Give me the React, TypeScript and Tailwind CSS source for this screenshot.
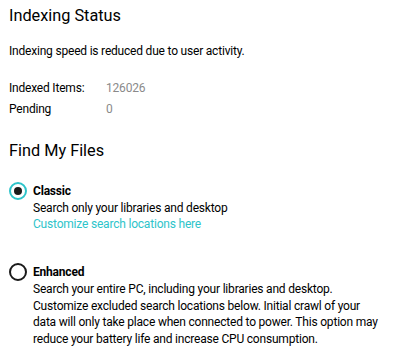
import React, { useState } from 'react';

type Mode = 'classic' | 'enhanced';

const Radio: React.FC<{ checked: boolean; onClick: () => void }> = ({ checked, onClick }) => (
  <button
    onClick={onClick}
    className={`flex h-[18px] w-[18px] shrink-0 items-center justify-center rounded-full border-2 ${
      checked ? 'border-[#2ec4ca]' : 'border-[#1a1a1a]'
    }`}
  >
    {checked && <span className="h-[8px] w-[8px] rounded-full bg-[#1a1a1a]" />}
  </button>
);

const App: React.FC = () => {
  const [mode, setMode] = useState<Mode>('classic');

  return (
    <div className="min-h-screen bg-white pl-[9px] text-black font-['Segoe_UI','Roboto',sans-serif]">
      <h1 className="mt-[5px] text-[16.3px] leading-[22px] font-normal">Indexing Status</h1>
      <p className="mt-4 text-[12px] leading-[17px] tracking-[-0.2px]">
        Indexing speed is reduced due to user activity.
      </p>

      <div className="mt-[18px] grid grid-cols-[97px_1fr] text-[12px] leading-[21px] tracking-[-0.2px]">
        <span>Indexed Items:</span>
        <span className="text-[#8a8a8a]">126026</span>
        <span>Pending</span>
        <span className="text-[#8a8a8a]">0</span>
      </div>

      <h2 className="mt-[20px] text-[16.3px] leading-[22px] font-normal">Find My Files</h2>

      <div className="mt-[20px] text-[12px] leading-[16px] tracking-[-0.2px]">
        <div className="flex items-center gap-[6px]">
          <Radio checked={mode === 'classic'} onClick={() => setMode('classic')} />
          <span className="font-bold">Classic</span>
        </div>
        <div className="pl-[24px]">
          <p>Search only your libraries and desktop</p>
          <a href="#" className="text-[#2ec4ca]">Customize search locations here</a>
        </div>
      </div>

      <div className="mt-[31px] text-[12px] leading-[16.7px] tracking-[-0.2px]">
        <div className="flex items-center gap-[6px]">
          <Radio checked={mode === 'enhanced'} onClick={() => setMode('enhanced')} />
          <span className="font-bold">Enhanced</span>
        </div>
        <p className="pl-[24px]">
          Search your entire PC, including your libraries and desktop.
          <br />
          Customize excluded search locations below. Initial crawl of your
          <br />
          data will only take place when connected to power. This option may
          <br />
          reduce your battery life and increase CPU consumption.
        </p>
      </div>
    </div>
  );
};

export default App;
